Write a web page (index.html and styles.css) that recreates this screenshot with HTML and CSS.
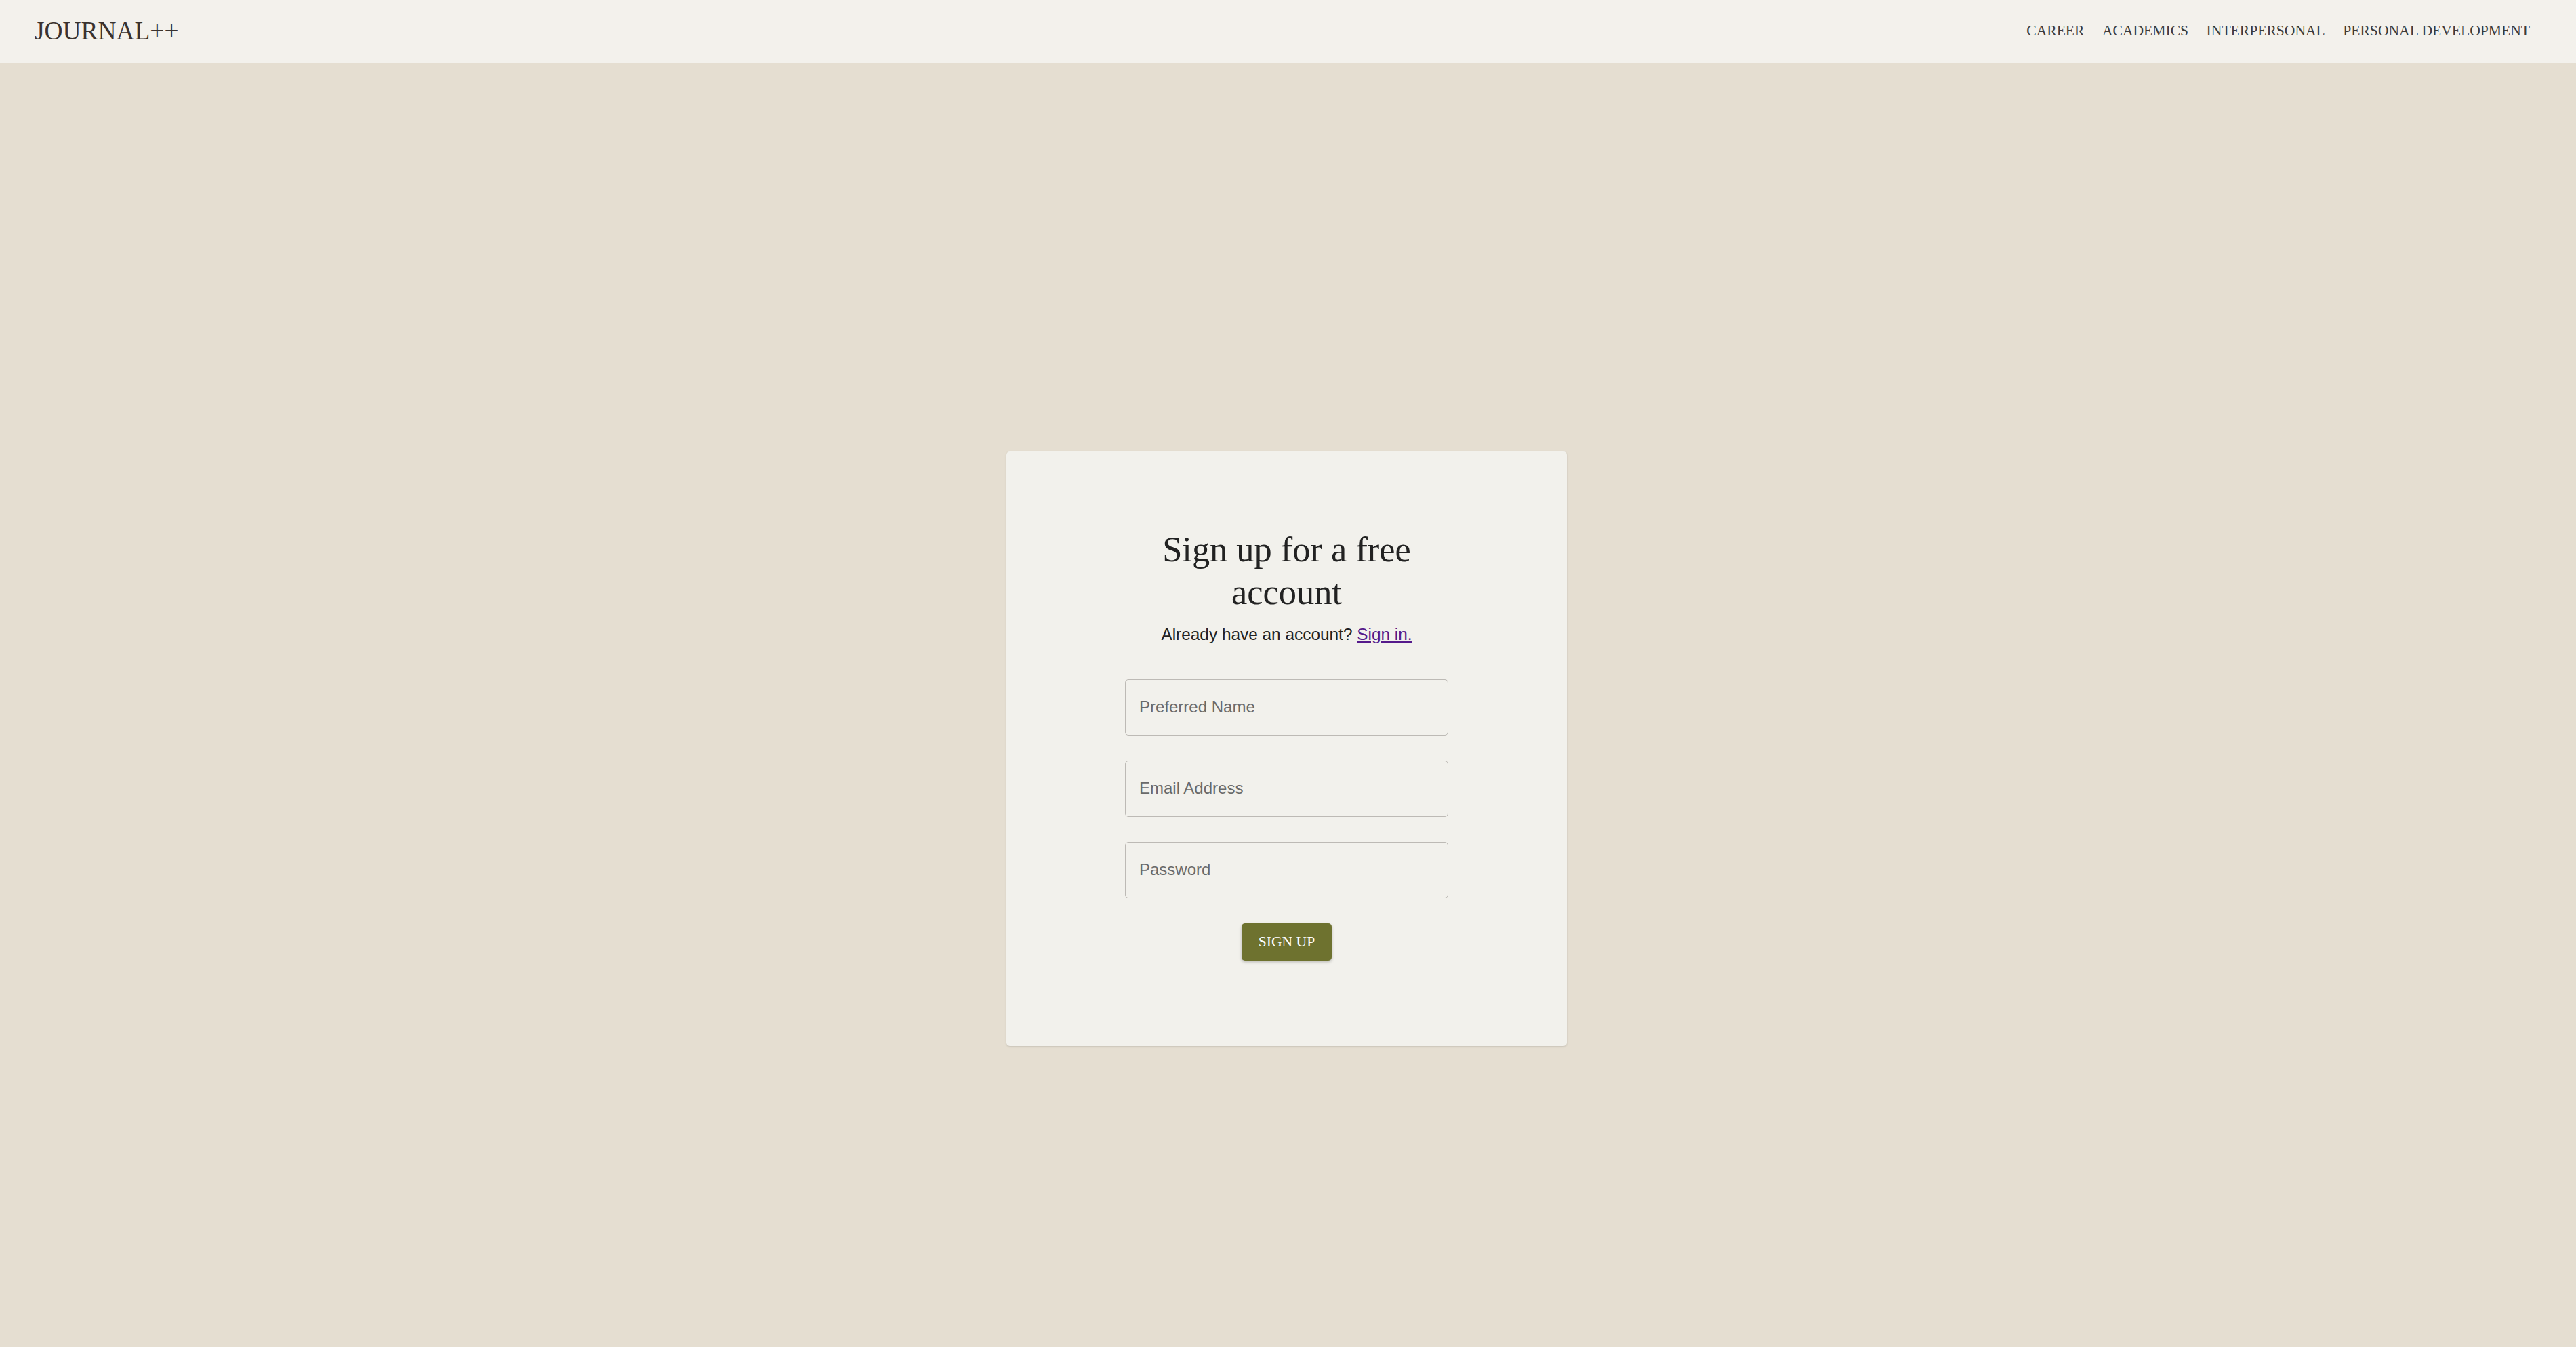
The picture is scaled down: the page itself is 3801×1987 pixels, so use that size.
FILE: index.html
```html
<!DOCTYPE html>
<html lang="en">

<head>
    <meta charset="UTF-8">
    <meta name="viewport" content="width=device-width, initial-scale=1.0">
    <title>Sign Up - Journal++</title>
    <link rel="stylesheet" href="styles.css">
</head>

<body>
    <nav class="navbar">
        <a href="index.html" class="logo">JOURNAL++</a>
        <div class="nav-links">
            <a href="#">CAREER</a>
            <a href="#">ACADEMICS</a>
            <a href="#">INTERPERSONAL</a>
            <a href="#">PERSONAL DEVELOPMENT</a>
        </div>
    </nav>

    <main class="page">
        <div class="signup-card">
            <div class="signup-inner">
                <h1>Sign up for a free account</h1>
                <p class="signin-text">Already have an account? <a href="#" class="signin-link">Sign in.</a></p>

                <form class="signup-form">
                    <input type="text" placeholder="Preferred Name">
                    <input type="email" placeholder="Email Address">
                    <input type="password" placeholder="Password">
                    <button type="submit" class="signup-btn">SIGN UP</button>
                </form>
            </div>
        </div>
    </main>
</body>

</html>
```

FILE: styles.css
```css
/* Basic Reset */
* {
    margin: 0;
    padding: 0;
    box-sizing: border-box;
}

/* Body Styling */
body {
    font-family: "Liberation Sans", Arial, sans-serif;
    font-size: 24px;
    background-color: #e5ded1;
    color: #222;
}

/* Navbar */
.navbar {
    height: 93px;
    display: flex;
    align-items: center;
    justify-content: space-between;
    padding: 0 68px 3px 51px;
    background-color: #f3f1ec;
}

.logo {
    font-family: "Liberation Serif", "Times New Roman", serif;
    font-size: 37.4px;
    color: #3a322e;
    text-decoration: none;
}

.nav-links {
    display: flex;
    gap: 26.5px;
}

.nav-links a {
    font-family: "Liberation Serif", "Times New Roman", serif;
    font-size: 21.6px;
    color: #3b3b3b;
    text-decoration: none;
}

/* Page area */
.page {
    min-height: calc(100vh - 93px);
    display: flex;
    align-items: center;
    justify-content: center;
    padding: 128px 4px 0 0;
}

/* Card */
.signup-card {
    width: 827px;
    padding: 113px 175px 126px;
    background-color: #f2f1ec;
    border-radius: 5px;
    box-shadow: 0 1px 3px rgba(0, 0, 0, 0.14);
}

.signup-inner {
    text-align: center;
}

.signup-inner h1 {
    font-family: "Liberation Serif", "Times New Roman", serif;
    font-weight: normal;
    font-size: 52.4px;
    line-height: 63px;
    color: #222;
}

.signin-text {
    margin-top: 17px;
    font-size: 24.4px;
    color: #222;
}

.signin-link {
    color: #551a8b;
}

/* Form */
.signup-form {
    display: flex;
    flex-direction: column;
    align-items: center;
    gap: 37px;
    margin-top: 52px;
}

.signup-form input {
    width: 100%;
    height: 83px;
    padding: 0 20px;
    font-family: "Liberation Sans", Arial, sans-serif;
    font-size: 24px;
    color: #333;
    background-color: #f2f1ec;
    border: 1.5px solid #bdbab5;
    border-radius: 5px;
}

.signup-form input::placeholder {
    color: #6a6a6a;
}

.signup-btn {
    height: 55px;
    padding: 0 25px;
    font-family: "Liberation Serif", "Times New Roman", serif;
    font-size: 21.6px;
    color: #fff;
    background-color: #6e722f;
    border: none;
    border-radius: 5px;
    box-shadow: 0 2px 4px rgba(0, 0, 0, 0.25);
    cursor: pointer;
}

.signup-btn:hover {
    background-color: #5f6328;
}
```
